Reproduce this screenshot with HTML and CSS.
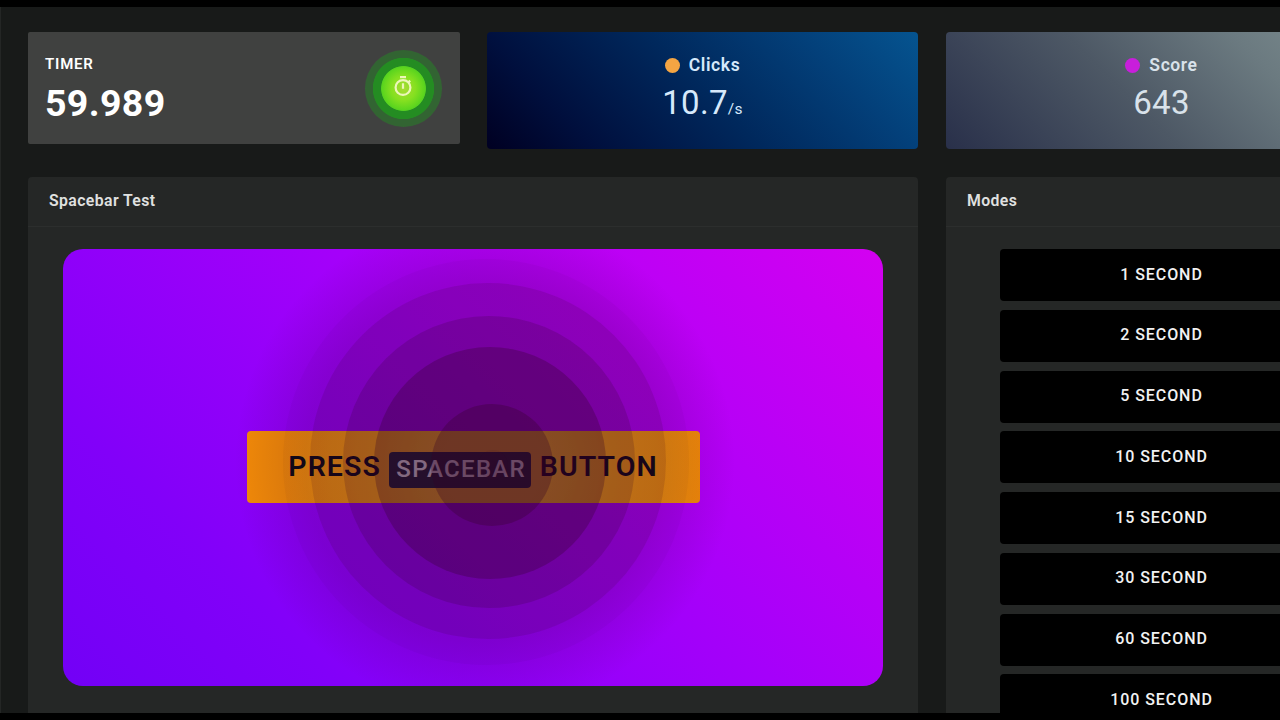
FILE: index.html
```html
<!DOCTYPE html>
<html lang="en">
<head>
<meta charset="utf-8">
<title>Spacebar Test</title>
<link rel="stylesheet" href="styles.css">
</head>
<body>
<main class="app">
  <div class="dashboard">
    <section class="timer">
      <div>
        <div class="timer-label">TIMER</div>
        <div class="timer-value">59.989</div>
      </div>
      <div class="pulse">
        <svg class="stopwatch" viewBox="0 0 20 22" fill="none" stroke="currentColor" stroke-width="2.2">
          <circle cx="10" cy="12.5" r="7.4"/>
          <path d="M7 2.2h6M10 8.3v5.4M15.2 7.6l2-2"/>
        </svg>
      </div>
    </section>
    <section class="stat stat-clicks">
      <div class="stat-title"><span class="dot dot-orange"></span><span>Clicks</span></div>
      <div class="stat-value">10.7<small>/s</small></div>
    </section>
    <section class="stat stat-score">
      <div class="stat-title"><span class="dot dot-magenta"></span><span>Score</span></div>
      <div class="stat-value">643</div>
    </section>
    <section class="panel panel-test">
      <h2 class="panel-title">Spacebar Test</h2>
      <div class="arena">
        <div class="press"><span>PRESS</span><kbd>SPACEBAR</kbd><span>BUTTON</span></div>
        <svg class="ripples" viewBox="0 0 820 437">
          <defs>
            <radialGradient id="halo" gradientUnits="userSpaceOnUse" cx="422" cy="213" r="250">
              <stop offset=".72" stop-color="#340028" stop-opacity=".16"/>
              <stop offset="1" stop-color="#340028" stop-opacity="0"/>
            </radialGradient>
          </defs>
          <circle cx="422" cy="213" r="250" fill="url(#halo)"/>
          <g fill="#340028">
            <circle cx="423" cy="213" r="203" opacity=".04"/>
            <circle cx="425" cy="212" r="178" opacity=".13"/>
            <circle cx="426" cy="213" r="146" opacity=".18"/>
            <circle cx="427" cy="214" r="116" opacity=".28"/>
            <circle cx="429" cy="216" r="61" opacity=".3"/>
            <circle cx="430" cy="216" r="15" opacity=".07"/>
          </g>
        </svg>
      </div>
    </section>
    <section class="panel">
      <h2 class="panel-title">Modes</h2>
      <div class="modes">
        <button class="mode">1 SECOND</button>
        <button class="mode">2 SECOND</button>
        <button class="mode">5 SECOND</button>
        <button class="mode">10 SECOND</button>
        <button class="mode">15 SECOND</button>
        <button class="mode">30 SECOND</button>
        <button class="mode">60 SECOND</button>
        <button class="mode">100 SECOND</button>
      </div>
    </section>
  </div>
</main>
</body>
</html>
```
FILE: styles.css
```css
* { box-sizing: border-box; }
body {
  margin: 0;
  height: 720px;
  padding: 7px 0;
  overflow: hidden;
  background: #000;
  font-family: Roboto, "Liberation Sans", sans-serif;
}
.app {
  height: 706px;
  overflow: hidden;
  background: #181a19;
  border-left: 1px solid #242625;
}
.dashboard {
  display: grid;
  grid-template-columns: 432px 432px 431px;
  grid-template-rows: 117px 640px;
  column-gap: 27px;
  row-gap: 28px;
  align-items: start;
  width: 1350px;
  padding: 25px 0 0 27px;
}
.timer {
  display: flex;
  justify-content: space-between;
  height: 112px;
  padding: 18px 18px 0 17px;
  border-radius: 2px;
  background: #404140;
  color: #fff;
}
.timer-label {
  padding-top: 4px;
  font-size: 15px;
  line-height: 20px;
  font-weight: 600;
  letter-spacing: .8px;
}
.timer-value {
  margin-top: 7px;
  font-size: 37.5px;
  line-height: 44px;
  font-weight: 700;
  letter-spacing: .35px;
}
.pulse {
  display: flex;
  align-items: center;
  justify-content: center;
  width: 77px;
  height: 77px;
  border-radius: 50%;
  background: radial-gradient(circle, #a8dc34 0, #86e020 12px, #5cd51e 21px, #55cf20 22px, #248c22 22.8px, #248c22 30.3px, #326432 31px);
  color: #ecf7b8;
}
.stopwatch {
  width: 20px;
  height: 22px;
  margin: 0 1px 6px 0;
}
.stat {
  height: 117px;
  padding-top: 20px;
  border-radius: 4px;
  text-align: center;
}
.stat-clicks {
  margin-right: 1px;
  color: #d6e9fb;
  background: linear-gradient(45deg, #000022 0%, #000f3d 20%, #00285c 50%, #03407a 78%, #055490 100%);
}
.stat-score {
  color: #d9e2ea;
  background: linear-gradient(45deg, #29304a 0%, #4d5865 43%, #6b7a80 73%, #7f9092 100%);
}
.stat-title {
  display: flex;
  align-items: center;
  justify-content: center;
  gap: 9px;
  font-size: 17.5px;
  line-height: 26px;
  font-weight: 600;
  letter-spacing: .6px;
}
.dot {
  width: 15px;
  height: 15px;
  border-radius: 50%;
}
.dot-orange { background: #f4a543; }
.dot-magenta { background: #c81edb; }
.stat-value {
  margin-top: 4px;
  font-size: 33px;
  line-height: 41px;
  font-weight: 400;
  letter-spacing: .3px;
}
.stat-value small {
  font-size: 15.5px;
  font-weight: 400;
  letter-spacing: .3px;
}
.panel {
  height: 640px;
  border-radius: 4px 4px 0 0;
  background: #252726;
}
.panel-test {
  grid-column: span 2;
  margin-right: 1px;
}
.panel-title {
  height: 50px;
  margin: 0;
  padding: 12px 21px;
  border-bottom: 1px solid #2c2e2d;
  color: #e0e1e0;
  font-size: 15.8px;
  line-height: 23px;
  font-weight: 600;
  letter-spacing: .4px;
}
.arena {
  position: relative;
  display: flex;
  align-items: center;
  justify-content: center;
  width: 820px;
  height: 437px;
  margin: 22px 0 0 35px;
  border-radius: 20px;
  overflow: hidden;
  background: linear-gradient(45deg, #7200f6 0%, #8200f9 22%, #a500fa 57%, #d400f1 100%);
}
.ripples {
  position: absolute;
  inset: 0;
  width: 820px;
  height: 437px;
}
.press {
  display: flex;
  align-items: center;
  justify-content: center;
  gap: 8.5px;
  width: 453px;
  height: 72px;
  margin: 0 0 1px;
  border-radius: 4px;
  background: radial-gradient(circle at 246px 34px, #ffc020 50px, #f8a410 120px, #f28a08 210px);
  color: #0a0a14;
  font-size: 28.5px;
  line-height: 34px;
  font-weight: 600;
  letter-spacing: 1.05px;
}
.press span { padding-bottom: 1px; }
.press kbd {
  width: 142px;
  height: 36px;
  margin-top: 5px;
  padding-left: 7px;
  border-radius: 4px;
  background: #142a34;
  color: #f6ffff;
  font: 500 24px/34px Roboto, "Liberation Sans", sans-serif;
  letter-spacing: 1.3px;
}
.modes {
  display: flex;
  flex-direction: column;
  gap: 8.75px;
  padding: 22px 54px 0 54px;
}
.mode {
  height: 52px;
  padding: 0 0 1.6px;
  border: 0;
  border-radius: 4px;
  background: #000;
  color: #f2f2f2;
  font: 500 16px/21px Roboto, "Liberation Sans", sans-serif;
  letter-spacing: .95px;
}
```
